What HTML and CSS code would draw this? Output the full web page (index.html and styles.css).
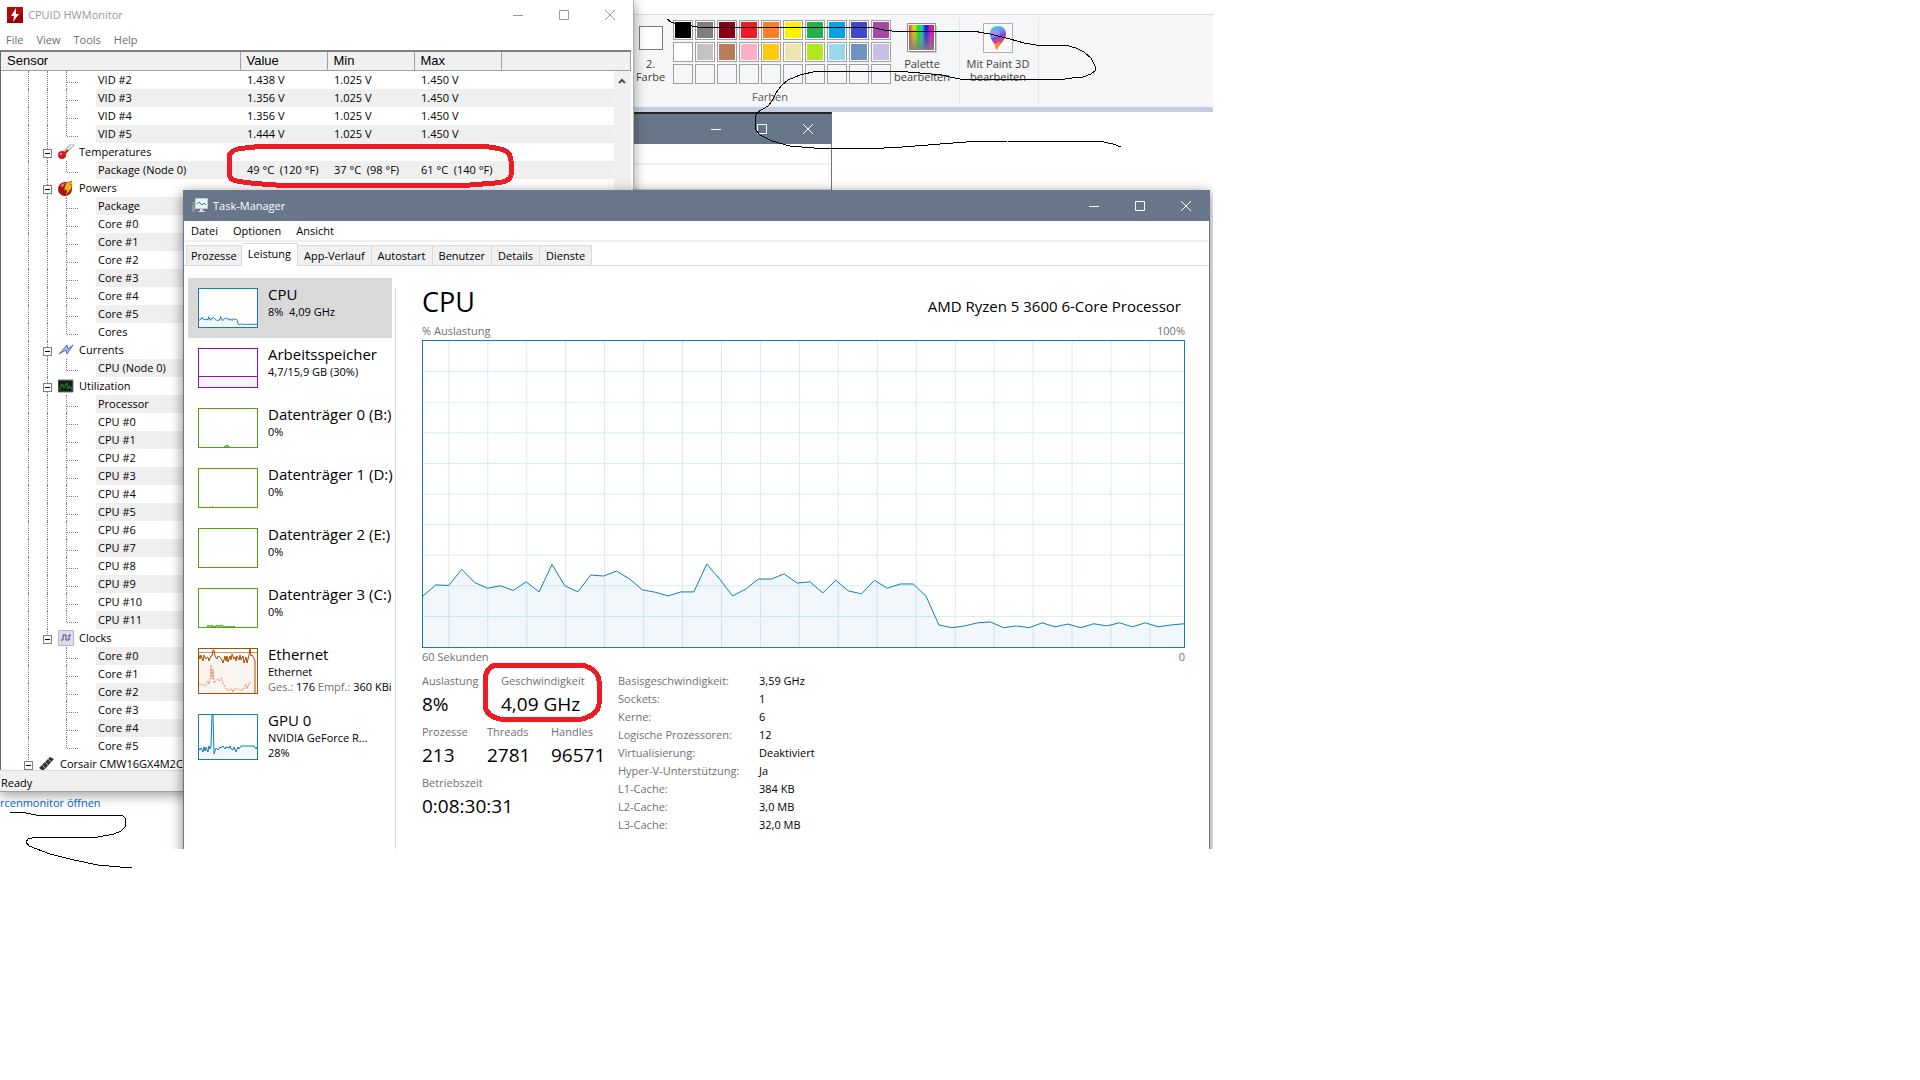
FILE: index.html
```html
<!DOCTYPE html>
<html lang="de">
<head>
  <meta charset="UTF-8" />
  <meta name="viewport" content="width=device-width, initial-scale=1.0"/>
  <title>Task-Manager</title>
  <link rel="stylesheet" href="styles.css">
</head>
<body>
  <main class="desktop">

    <!-- Paint ribbon -->
    <section class="paint">
      <div class="ribbon">
        <button class="second-color"><span class="second-color-box"></span><span>2.</span><span>Farbe</span></button>
        <div class="colors">
          <div class="swatches" id="swatches"></div>
          <div class="group-name">Farben</div>
        </div>
        <button class="tool tool-palette">
          <svg width="30" height="30" viewBox="0 0 30 30">
            <defs>
              <linearGradient id="rainbow">
                <stop offset="0" stop-color="#f04020"/><stop offset=".2" stop-color="#e8e010"/>
                <stop offset=".4" stop-color="#10e020"/><stop offset=".52" stop-color="#10d0e0"/>
                <stop offset=".68" stop-color="#1010e0"/><stop offset=".88" stop-color="#f010e0"/>
                <stop offset="1" stop-color="#e01050"/>
              </linearGradient>
              <linearGradient id="fade" x2="0" y2="1">
                <stop offset=".1" stop-color="#808080" stop-opacity="0"/><stop offset="1" stop-color="#808080" stop-opacity=".9"/>
              </linearGradient>
            </defs>
            <path d="M.5.5h28v28h-28z" fill="#fff" stroke="#8c8c8c"/>
            <path d="M29.5 3v26.500H3" fill="none" stroke="#ccc"/>
            <path d="M2 2h25v25H2z" fill="url(#rainbow)"/>
            <path d="M2 2h25v25H2z" fill="url(#fade)"/>
          </svg>
          <span>Palette</span><span>bearbeiten</span>
        </button>
        <button class="tool tool-3d">
          <svg width="30" height="30" viewBox="0 0 30 30">
            <defs>
              <linearGradient id="drop" x1=".3" x2=".6" y2="1">
                <stop offset="0" stop-color="#20d8f0"/><stop offset=".3" stop-color="#7088f0"/>
                <stop offset=".48" stop-color="#7848d8"/><stop offset=".65" stop-color="#e04080"/>
                <stop offset=".82" stop-color="#e84848"/><stop offset="1" stop-color="#ffb400"/>
              </linearGradient>
            </defs>
            <path d="M.5.5h29v29H.5z" fill="#f8f8f8" stroke="#b0b0b0"/>
            <path d="M15 3c5 0 8 3 8 8 0 7-7 9-9 16-1-1-2-2-2-5-2-3-5-7-5-11 0-5 3-8 8-8z" fill="url(#drop)"/>
            <path d="M8 8c3-3 8-2 9 1s-3 5-8 5z" fill="#b090ff" opacity=".7"/>
            <path d="M12 21c3-1 5-2 6-3-2 3-3 5-4 9-1-1-2-3-2-6z" fill="#ff9c10"/>
          </svg>
          <span>Mit Paint 3D</span><span>bearbeiten</span>
        </button>
      </div>
    </section>

    <!-- Window behind, only its right end shows -->
    <section class="back-window">
      <header class="titlebar titlebar-dark">
        <div class="controls">
          <button aria-label="Minimieren"><svg width="10" height="10"><path d="M0 5.500h10"/></svg></button>
          <button aria-label="Maximieren"><svg width="10" height="10"><path d="M.5.5h9v9h-9z"/></svg></button>
          <button aria-label="Schließen"><svg width="10" height="10"><path d="M0 0l10 10M10 0L0 10"/></svg></button>
        </div>
      </header>
      <div class="back-menu"></div>
      <div class="back-tabs"></div>
      <a class="resource-link" href="#">rcenmonitor öffnen</a>
    </section>

    <!-- HWMonitor -->
    <section class="hwmonitor">
      <header class="titlebar">
        <svg width="16" height="16" viewBox="0 0 16 16"><path d="M0 0h16v16H0z" fill="#9c0000"/><path d="M0 0h16v7L0 13z" fill="#b00c0c"/><path d="M9 1L4 9h3l-1 6 6-8H9z" fill="#fff"/></svg>
        <span class="title">CPUID HWMonitor</span>
        <div class="controls">
          <button aria-label="Minimize"><svg width="10" height="10"><path d="M0 5.500h10"/></svg></button>
          <button aria-label="Maximize"><svg width="10" height="10"><path d="M.5.5h9v9h-9z"/></svg></button>
          <button aria-label="Close"><svg width="10" height="10"><path d="M0 0l10 10M10 0L0 10"/></svg></button>
        </div>
      </header>
      <nav class="menu">
        <button>File</button><button>View</button><button>Tools</button><button>Help</button>
      </nav>
      <div class="list">
        <table>
          <colgroup><col class="col-sensor"><col class="col-value"><col class="col-value"><col class="col-value"><col><col class="col-scroll"></colgroup>
          <thead>
            <tr><th>Sensor</th><th>Value</th><th>Min</th><th>Max</th><th colspan="2"></th></tr>
          </thead>
          <tbody id="sensors"></tbody>
        </table>
      </div>
      <footer class="status">Ready</footer>
    </section>

    <!-- Task-Manager -->
    <section class="taskmgr">
      <header class="titlebar titlebar-dark">
        <svg width="16" height="16" viewBox="0 0 16 16">
          <path d="M0 4h3v10H0z" fill="#8c949c"/><path d="M0 5h2v2H0z" fill="#4caf30"/>
          <path d="M3.500.5h12v10h-12z" fill="#e8f6fc" stroke="#c8c8c8"/>
          <path d="M5 6l2-2 3 3 2-2 2 2" fill="none" stroke="#2080b0"/>
          <path d="M8 11h3v2h2v1H6v-1h2z" fill="#d8d8d8"/>
        </svg>
        <span class="title">Task-Manager</span>
        <div class="controls">
          <button aria-label="Minimieren"><svg width="10" height="10"><path d="M0 5.500h10"/></svg></button>
          <button aria-label="Maximieren"><svg width="10" height="10"><path d="M.5.5h9v9h-9z"/></svg></button>
          <button aria-label="Schließen"><svg width="10" height="10"><path d="M0 0l10 10M10 0L0 10"/></svg></button>
        </div>
      </header>
      <nav class="menu">
        <button>Datei</button><button>Optionen</button><button>Ansicht</button>
      </nav>
      <div class="tabs">
        <button>Prozesse</button><button class="active">Leistung</button><button>App-Verlauf</button><button>Autostart</button><button>Benutzer</button><button>Details</button><button>Dienste</button>
      </div>

      <div class="content">
        <aside class="sidebar">
          <button class="item selected">
            <svg class="graph blue" viewBox="0 0 590 100" preserveAspectRatio="none" id="cpuMini"></svg>
            <span class="item-text"><b>CPU</b><span>8%&nbsp; 4,09 GHz</span></span>
          </button>
          <button class="item">
            <svg class="graph purple" viewBox="0 0 58 38"><path class="area" d="M-1 27.500h60V40H-1z"/></svg>
            <span class="item-text"><b>Arbeitsspeicher</b><span>4,7/15,9 GB (30%)</span></span>
          </button>
          <button class="item">
            <svg class="graph green" viewBox="0 0 58 38"><path class="area" d="M25 38l1-1h1l1-1 1 1h1v1z"/></svg>
            <span class="item-text"><b>Datenträger 0 (B:)</b><span>0%</span></span>
          </button>
          <button class="item">
            <svg class="graph green" viewBox="0 0 58 38"><path class="area" d="M13 38h1z"/></svg>
            <span class="item-text"><b>Datenträger 1 (D:)</b><span>0%</span></span>
          </button>
          <button class="item">
            <svg class="graph green" viewBox="0 0 58 38"></svg>
            <span class="item-text"><b>Datenträger 2 (E:)</b><span>0%</span></span>
          </button>
          <button class="item">
            <svg class="graph green" viewBox="0 0 58 38"><path class="area" d="M8 38l1-2 1 1 2 0 1-1 1 2 3-1 1-1 2 1 2-1 2 1h1l1 1h8l1-1 1 1z"/></svg>
            <span class="item-text"><b>Datenträger 3 (C:)</b><span>0%</span></span>
          </button>
          <button class="item tall">
            <svg class="graph orange" viewBox="0 0 58 44">
              <path class="area" d="M-1 3l2 7 1-4 2 6 1-6 2 4 2-2 1 4 2-5 1 0 1-6h1l1 6 2 3 1-3 2 1 2 3 1 3 2-7 1 5 1-5 1 6 2-6 1 4 1-6 2 5 1-2 1 4 1-5 2 4 1-5 1 5 2-4 1 7 2-6 1 6 2-8 1-7 1 8 1-1 2 3 1 3v40H-1z"/>
              <path d="M0 3.500h58" opacity=".6"/>
              <path class="receive" d="M0 35l2 1 2-1 1 2 2-1 2-4 1 3 1-5 1-14 1 14 1-10 1 14 2-2 2-2 1 2 2-3 2 5 2 4 2 3h3l2-1 1 3 1-3h4l2 1h3l1-2 2-4 1 5 2-6h2"/>
            </svg>
            <span class="item-text"><b>Ethernet</b><span>Ethernet</span><span><i>Ges.:</i> 176 <i>Empf.:</i> 360 KBi</span></span>
          </button>
          <button class="item tall">
            <svg class="graph blue" viewBox="0 0 58 44"><path class="area" d="M-1 32l2 3 1-2 2 4 1-5 1 4 1-4 2 5 1-6 1 3 1-3 1-31h1l1 39 2-6 2 2 2-3 1 1 2-2 2 3 1-2 3 1 1-2 1 3 2 1 1-3 2 5 2-5 1 2 2-3h13l2 3 1-2 2 3v20H-1z"/></svg>
            <span class="item-text"><b>GPU 0</b><span>NVIDIA GeForce R...</span><span>28%</span></span>
          </button>
        </aside>

        <div class="detail">
          <div class="detail-head">
            <h1>CPU</h1>
            <span class="cpu-name">AMD Ryzen 5 3600 6-Core Processor</span>
          </div>
          <div class="axis"><span>% Auslastung</span><span>100%</span></div>
          <svg class="chart blue" viewBox="0 0 590 100" preserveAspectRatio="none" id="cpuChart"></svg>
          <div class="axis"><span>60 Sekunden</span><span>0</span></div>

          <div class="stats">
            <div class="live">
              <dl class="pair"><div><dt>Auslastung</dt><dd>8%</dd></div><div><dt>Geschwindigkeit</dt><dd>4,09 GHz</dd></div></dl>
              <dl class="triple"><div><dt>Prozesse</dt><dd>213</dd></div><div><dt>Threads</dt><dd>2781</dd></div><div><dt>Handles</dt><dd>96571</dd></div></dl>
              <dl><div><dt>Betriebszeit</dt><dd>0:08:30:31</dd></div></dl>
            </div>
            <table class="specs">
              <tr><th>Basisgeschwindigkeit:</th><td>3,59 GHz</td></tr>
              <tr><th>Sockets:</th><td>1</td></tr>
              <tr><th>Kerne:</th><td>6</td></tr>
              <tr><th>Logische Prozessoren:</th><td>12</td></tr>
              <tr><th>Virtualisierung:</th><td>Deaktiviert</td></tr>
              <tr><th>Hyper-V-Unterstützung:</th><td>Ja</td></tr>
              <tr><th>L1-Cache:</th><td>384 KB</td></tr>
              <tr><th>L2-Cache:</th><td>3,0 MB</td></tr>
              <tr><th>L3-Cache:</th><td>32,0 MB</td></tr>
            </table>
          </div>
        </div>
      </div>
    </section>
  </main>

  <!-- Pen strokes over the windows -->
  <svg class="ink" width="1213" height="880" viewBox="0 0 1213 880">
    <path class="red" d="M231 153Q233 149 245 148L264 146H476Q498 147 506 151Q512 155 511 165V175Q510 182 495 183Q482 184 470 185H276Q242 183 233 180Q229 178 229 172V158Q229 154 231 153z"/>
    <path class="red" d="M495 665H582Q598 669 599 681V704Q598 715 582 719H500Q486 716 485 705V679Q486 668 495 665z"/>
    <polyline points="667,19 671,22 677,24 692,26 697,27 870,27 884,30 892,31 973,31 984,33 990,34 1010,39 1024,43 1036,45 1065,45 1076,48 1084,52 1091,58 1095,66 1096,70 1091,74 1083,77 1072,78 1065,79 960,79 950,77 942,75 920,73 908,72 895,71 817,71 800,75 788,80 781,86 776,93 772,101 768,106 758,112 755,117 755,129 760,135 772,141 790,146 802,147 814,148 884,148 902,147 915,146 966,142 1008,141 1099,141 1113,144 1121,147"/>
    <polyline points="10,812 19,812 26,813 36,815 122,815 125,818 125,827 121,831 114,834 98,837 36,837 28,839 26,842 29,846 50,854 74,860 98,865 120,867 132,867"/>
  </svg>

  <script>
    // Paint colours
    const colors = [
      "#000000", "#7f7f7f", "#880015", "#ed1c24", "#ff7f27", "#fff200", "#22b14c", "#00a2e8", "#3f48cc", "#a349a4",
      "#ffffff", "#c3c3c3", "#b97a57", "#ffaec9", "#ffc90e", "#efe4b0", "#b5e61d", "#99d9ea", "#7092be", "#c8bfe7"
    ];
    const swatches = document.getElementById("swatches");
    for (let i = 0; i < 30; i++) {
      const button = document.createElement("button");
      button.className = i < colors.length ? "swatch" : "swatch empty";
      button.setAttribute("aria-label", colors[i] || "leer");
      if (colors[i]) button.style.backgroundColor = colors[i];
      swatches.appendChild(button);
    }

    // HWMonitor tree
    const icons = {
      temperature: '<path d="M14 1L6 9" stroke="#aaa" stroke-width="4" stroke-linecap="round"/><path d="M14 1L6 9" stroke="#eee" stroke-width="2" stroke-linecap="round"/><path d="M10 6l-5 5" stroke="#d11" stroke-width="2"/><circle cx="4" cy="11" r="4" fill="#d81820"/><circle cx="3" cy="10" r="1" fill="#fbb"/>',
      power: '<circle cx="7" cy="9" r="7" fill="#a41410"/><path d="M2 6a6 6 0 0 1 5-3l-2 4z" fill="#e87868"/><path d="M8 3l6-2-2 4 2-1-1 5-5 6 1-5H6z" fill="#f8b020" stroke="#a85000" stroke-width=".6"/>',
      current: '<path d="M1 12L9 3l1 4 5-4-6 9-1-4z" fill="#a8c0ec" stroke="#5868a0"/>',
      load: '<path d="M0 2h15v12H0z" fill="#142018" stroke="#777"/><path d="M1 12l3-6 2 4 3-5 1 6 2-3 2 4" fill="none" stroke="#209030"/>',
      clock: '<path d="M.5.5h15v15H.5z" fill="#dcdce4" stroke="#b8b8c0"/><path d="M3 10h2V5h3v5h3V5h2" fill="none" stroke="#404098"/>',
      memory: '<path d="M0 12L11 1l4 2L4 15z" fill="#333"/><path d="M3 9l3 3M6 6l3 3M9 3l3 3" stroke="#aaa"/>'
    };
    const volts = [["VID #2", "1.438 V"], ["VID #3", "1.356 V"], ["VID #4", "1.356 V"], ["VID #5", "1.444 V"]];
    const groups = [
      { rows: volts.map(v => [...v, "1.025 V", "1.450 V"]) },
      { name: "Temperatures", icon: "temperature", rows: [["Package (Node 0)", "49 °C\u00a0 (120 °F)", "37 °C\u00a0 (98 °F)", "61 °C\u00a0 (140 °F)"]] },
      { name: "Powers", icon: "power", rows: [["Package"], ...numbered("Core", 6), ["Cores"]] },
      { name: "Currents", icon: "current", rows: [["CPU (Node 0)"]] },
      { name: "Utilization", icon: "load", rows: [["Processor"], ...numbered("CPU", 12)] },
      { name: "Clocks", icon: "clock", rows: numbered("Core", 6) }
    ];

    function numbered(name, count) {
      return Array.from({ length: count }, (_, i) => [`${name} #${i}`]);
    }

    function branch(name, icon, kind) {
      return `<tr><td colspan="5"><div class="tree ${kind}"><i class="line"></i><i class="line"></i><i class="box"></i>` +
        `<svg width="16" height="16" viewBox="0 0 16 16" fill="none">${icons[icon]}</svg><span>${name}</span></div></td>`;
    }

    let html = "";
    groups.forEach((group, g) => {
      if (group.name) html += branch(group.name, group.icon, g === groups.length - 1 ? "branch last" : "branch") + "</tr>";
      group.rows.forEach((row, i) => {
        const striped = (i + (group.name ? 0 : 1)) % 2 === 0;
        const end = i === group.rows.length - 1;
        const inner = g === groups.length - 1 ? "" : "line";
        html += `<tr class="${striped ? "striped" : ""}"><td><div class="tree"><i class="line"></i><i class="${inner}"></i>` +
          `<i class="leaf ${end ? "end" : ""}"></i><span class="name">${row[0]}</span></div></td>` +
          [1, 2, 3, 4].map(n => `<td class="value">${row[n] || ""}</td>`).join("");
        if (g === 0 && i === 0) {
          html += '<td class="scroll" rowspan="99"><svg width="8" height="6" viewBox="0 0 8 6"><path d="M1 5l3-3 3 3" fill="none" stroke="#505050" stroke-width="2"/></svg></td>';
        }
        html += "</tr>";
      });
    });
    html += branch("Corsair CMW16GX4M2C3200C16", "memory", "root last") + "</tr>";
    document.getElementById("sensors").innerHTML = html;

    // CPU load, one sample a second
    const load = [
      16.7, 20.3, 20.1, 25.4, 21.1, 19.2, 20, 18.5, 21.3, 18, 27, 20, 18, 23.5, 23.2, 24.8, 22.3, 18.7, 17.9, 16.7,
      18, 18, 27.1, 22.2, 16.7, 18.9, 22.2, 22.2, 23.9, 20.9, 21.3, 17.7, 21.8, 18.3, 17.4, 21.8, 19.2, 20.6, 20.6, 16.6,
      7.2, 6.3, 6.9, 7.9, 8.2, 6.3, 6.9, 6.3, 7.9, 6.6, 7.5, 6.3, 7.6, 6.9, 7.9, 6.6, 7.9, 6.6, 7.2, 7.6
    ];
    const points = load.map((value, i) => `${i * 10},${100 - value}`).join(" ");
    const area = `<polygon class="area" points="-9,110 -9,${100 - load[0]} ${points} 599,${100 - load[59]} 599,110"/>`;

    let grid = "";
    for (let y = 10; y < 100; y += 10) grid += `M0 ${y}H590`;
    for (let i = 0; i < 19; i++) grid += `M${20 + i * 30.2} 0V100`;

    document.getElementById("cpuChart").innerHTML = `<path class="grid" d="${grid}"/>` + area;
    document.getElementById("cpuMini").innerHTML = area;
  </script>
</body>
</html>
```
FILE: styles.css
```css
* {
  box-sizing: border-box;
}

body {
  margin: 0;
  background-color: #ffffff;
  color: #000000;
  font: 11px/18px "Open Sans", "Noto Sans", sans-serif;
}

button {
  padding: 0;
  border: none;
  background: none;
  color: inherit;
  font: inherit;
}

svg {
  flex: none;
}

table {
  width: 100%;
  border-collapse: collapse;
}

th, td {
  padding: 0;
  text-align: left;
  font-weight: normal;
}

/* The windows lie freely on this area and are cut off at its edge */
.desktop {
  position: relative;
  width: 1213px;
  height: 849px;
  overflow: hidden;
}

.paint, .back-window, .hwmonitor, .taskmgr {
  position: absolute;
  display: flex;
  flex-direction: column;
}

/* Paint */
.paint {
  top: 14px;
  left: 0;
  right: 0;
}

.ribbon {
  display: flex;
  height: 98px;
  padding: 3px 0 3px 634px;
  border-top: 1px solid #dadbdc;
  border-bottom: 5px solid #c5cfe0;
  background-color: #f5f6f7;
  color: #3c3c3c;
  line-height: 13px;
  white-space: nowrap;
}

.second-color {
  display: flex;
  flex-direction: column;
  align-items: center;
  width: 33px;
  padding-top: 8px;
}

.second-color-box {
  width: 24px;
  height: 24px;
  margin-bottom: 7px;
  border: 1px solid #7a7a7a;
  background-color: #ffffff;
}

.colors {
  padding: 2px 0 0 6px;
}

.swatches {
  display: grid;
  grid-template-columns: repeat(10, 20px);
  gap: 2px;
}

.swatch {
  height: 20px;
  border: 1px solid #a0a0a0;
  box-shadow: inset 0 0 0 1px #ffffff;
}

.swatch.empty {
  box-shadow: none;
}

.group-name {
  margin-top: 6px;
  padding-right: 24px;
  text-align: center;
  color: #5a5a5a;
}

.tool {
  display: flex;
  flex-direction: column;
  align-items: center;
  padding-top: 5px;
  border-right: 1px solid #e2e3e4;
}

.tool svg {
  margin-bottom: 4px;
}

.tool-palette {
  width: 69px;
  padding-right: 6px;
}

.tool-3d {
  width: 79px;
  padding-right: 2px;
}

/* Title bars and menus */
.titlebar {
  display: flex;
  align-items: center;
  height: 29px;
  padding: 0 0 0 7px;
  gap: 5px;
  color: #999999;
}

.titlebar-dark {
  height: 31px;
  padding-left: 8px;
  background-color: #67768a;
  color: #ffffff;
}

.controls {
  display: flex;
  margin-left: auto;
}

.controls button {
  display: grid;
  place-items: center;
  width: 46px;
  height: 29px;
}

.controls path {
  fill: none;
  stroke: currentColor;
}

.menu {
  display: flex;
  gap: 15px;
  height: 19px;
  padding: 0 7px;
}

/* Window behind */
.back-window {
  top: 112px;
  left: 0;
  width: 832px;
  bottom: 0;
  border-top: 2px solid #222222;
  border-right: 1px solid #67768a;
  background-color: #ffffff;
}

.back-window .titlebar {
  height: 30px;
}

.back-menu {
  height: 21px;
  border-bottom: 2px solid #f0f0f0;
}

.back-tabs {
  height: 25px;
  border-bottom: 1px solid #d9d9d9;
}

.resource-link {
  margin-top: auto;
  padding-bottom: 37px;
  color: #0066cc;
  text-decoration: none;
}

/* HWMonitor */
.hwmonitor {
  top: 0;
  left: 0;
  width: 634px;
  height: 792px;
  background-color: #ffffff;
  border-right: 1px solid #b0b0b0;
  border-bottom: 1px solid #a0a0a0;
  box-shadow: 0 3px 12px rgba(0,0,0,0.4);
}

.hwmonitor .menu {
  gap: 13px;
  height: 21px;
  padding: 1px 6px;
  color: #6d6d6d;
}

.list {
  flex: 1;
  overflow: hidden;
  margin-right: 2px;
  border-top: 2px solid #808080;
  border-left: 1px solid #696969;
}

.list table {
  table-layout: fixed;
}

.col-sensor {
  width: 239px;
}

.col-value {
  width: 87px;
}

.col-scroll {
  width: 17px;
}

.list th {
  height: 18px;
  padding: 1px 0 0 6px;
  border-right: 1px solid #a0a0a0;
  border-bottom: 1px solid #a0a0a0;
  background-color: #f0f0f0;
  font: 13px/16px "Liberation Sans", Arial, sans-serif;
}

.list td {
  height: 18px;
}

.list .value {
  padding-left: 7px;
  white-space: nowrap;
}

.list .scroll {
  padding: 6px 4px;
  background-color: #f0f0f0;
  vertical-align: top;
  line-height: 6px;
}

.striped .value, .striped .name {
  background-color: #efefef;
}

.tree {
  display: flex;
  align-items: center;
  height: 18px;
  padding-left: 27px;
  white-space: nowrap;
}

.tree i {
  width: 19px;
  height: 18px;
}

.tree .line, .tree .leaf {
  border-left: 1px dotted #808080;
}

/* Stub from the vertical line to the sensor name */
.tree .leaf {
  width: 30px;
}

.tree .leaf::after {
  content: "";
  display: block;
  width: 11px;
  height: 11px;
  border-bottom: 1px dotted #808080;
}

.tree .end {
  height: 11px;
  align-self: flex-start;
}

.tree .name {
  flex: 1;
  padding-left: 2px;
}

.branch .line + .line {
  width: 11px;
}

.last .line:nth-child(2), .root .line:first-child {
  height: 9px;
  align-self: flex-start;
}

.root .line:nth-child(2) {
  display: none;
}

.root .line:first-child {
  width: 11px;
}

.tree .box {
  width: 9px;
  height: 9px;
  margin: 3px 6px 0 -15px;
  border: 1px solid #808080;
  background: linear-gradient(#000000, #000000) center / 5px 1px no-repeat #ffffff;
}

.tree svg {
  margin-right: 5px;
}

.status {
  height: 21px;
  padding: 2px 1px;
  border-top: 1px solid #d8d8d8;
  background-color: #f0f0f0;
  line-height: 19px;
}

/* Task-Manager */
.taskmgr {
  top: 190px;
  left: 183px;
  width: 1027px;
  height: 760px;
  border: 1px solid #67768a;
  border-top: none;
  background-color: #ffffff;
  box-shadow: 0 3px 12px rgba(0,0,0,0.5);
}

.tabs {
  display: flex;
  align-items: flex-end;
  height: 26px;
  padding-left: 2px;
  border-top: 2px solid #f0f0f0;
  border-bottom: 1px solid #d9d9d9;
}

.tabs button {
  height: 20px;
  padding: 0 6px;
  border: 1px solid #d9d9d9;
  border-bottom: none;
  border-left: none;
  background-color: #f0f0f0;
}

.tabs button:first-child {
  padding: 0 4px;
  border-left: 1px solid #d9d9d9;
}

.tabs .active {
  height: 23px;
  padding-bottom: 2px;
  margin-bottom: -1px;
  background-color: #ffffff;
}

.content {
  display: flex;
  flex: 1;
  padding: 12px 24px 0 4px;
}

.sidebar {
  width: 208px;
  overflow: hidden;
  background: linear-gradient(#d9d9d9, #d9d9d9) right 10px / 1px 100% no-repeat;
}

.item {
  display: flex;
  gap: 10px;
  width: 100%;
  height: 60px;
  padding: 10px 0 0 10px;
  text-align: left;
  white-space: nowrap;
}

.item.tall {
  height: 66px;
}

.selected {
  width: 204px;
  background-color: #d9d9d9;
}

.graph {
  width: 60px;
  height: 40px;
  border: 1px solid;
  background-color: #ffffff;
}

.tall .graph {
  height: 46px;
}

.item-text {
  display: flex;
  flex-direction: column;
  line-height: 15px;
}

.item-text b {
  margin-top: -3px;
  font-size: 15px;
  font-weight: normal;
  line-height: 19px;
}

.item-text i {
  color: #707070;
  font-style: normal;
}

.blue {
  color: #117dbb;
}

.purple {
  color: #8b12ae;
}

.green {
  color: #4da60c;
}

.orange {
  color: #a74f01;
}

.graph path, .area {
  fill: currentColor;
  fill-opacity: 0.06;
  stroke: currentColor;
  vector-effect: non-scaling-stroke;
}

.graph .receive {
  fill: none;
  stroke: #e98a60;
  stroke-dasharray: 2 1;
}

.detail {
  flex: 1;
  padding: 6px 0 0 26px;
}

.detail-head {
  display: flex;
  justify-content: space-between;
  align-items: baseline;
  padding: 0 4px 2px 0;
}

h1 {
  margin: 0;
  font-size: 27px;
  font-weight: normal;
  line-height: 36px;
}

.cpu-name {
  font-size: 15px;
}

.axis {
  display: flex;
  justify-content: space-between;
  color: #707070;
}

.chart {
  display: block;
  width: 100%;
  height: 308px;
  border: 1px solid;
}

.grid {
  fill: none;
  stroke: #d9eaf4;
  vector-effect: non-scaling-stroke;
}

.stats {
  display: flex;
  padding-top: 6px;
}

.live {
  width: 196px;
}

.live dl {
  display: grid;
  height: 51px;
  margin: 0;
}

.live .pair {
  grid-template-columns: 79px 1fr;
}

.live .triple {
  grid-template-columns: 65px 64px 1fr;
}

dt {
  color: #707070;
}

dd {
  margin: 0;
  font-size: 19px;
  line-height: 29px;
}

.specs {
  width: 240px;
  height: 162px;
}

.specs th {
  width: 141px;
  color: #707070;
}

/* Pen strokes */
.ink {
  position: absolute;
  top: 0;
  left: 0;
  pointer-events: none;
}

.ink polyline, .ink path {
  fill: none;
  stroke: #000000;
  shape-rendering: crispEdges;
}

.ink .red {
  stroke: #ed1c24;
  stroke-width: 5;
}
```
